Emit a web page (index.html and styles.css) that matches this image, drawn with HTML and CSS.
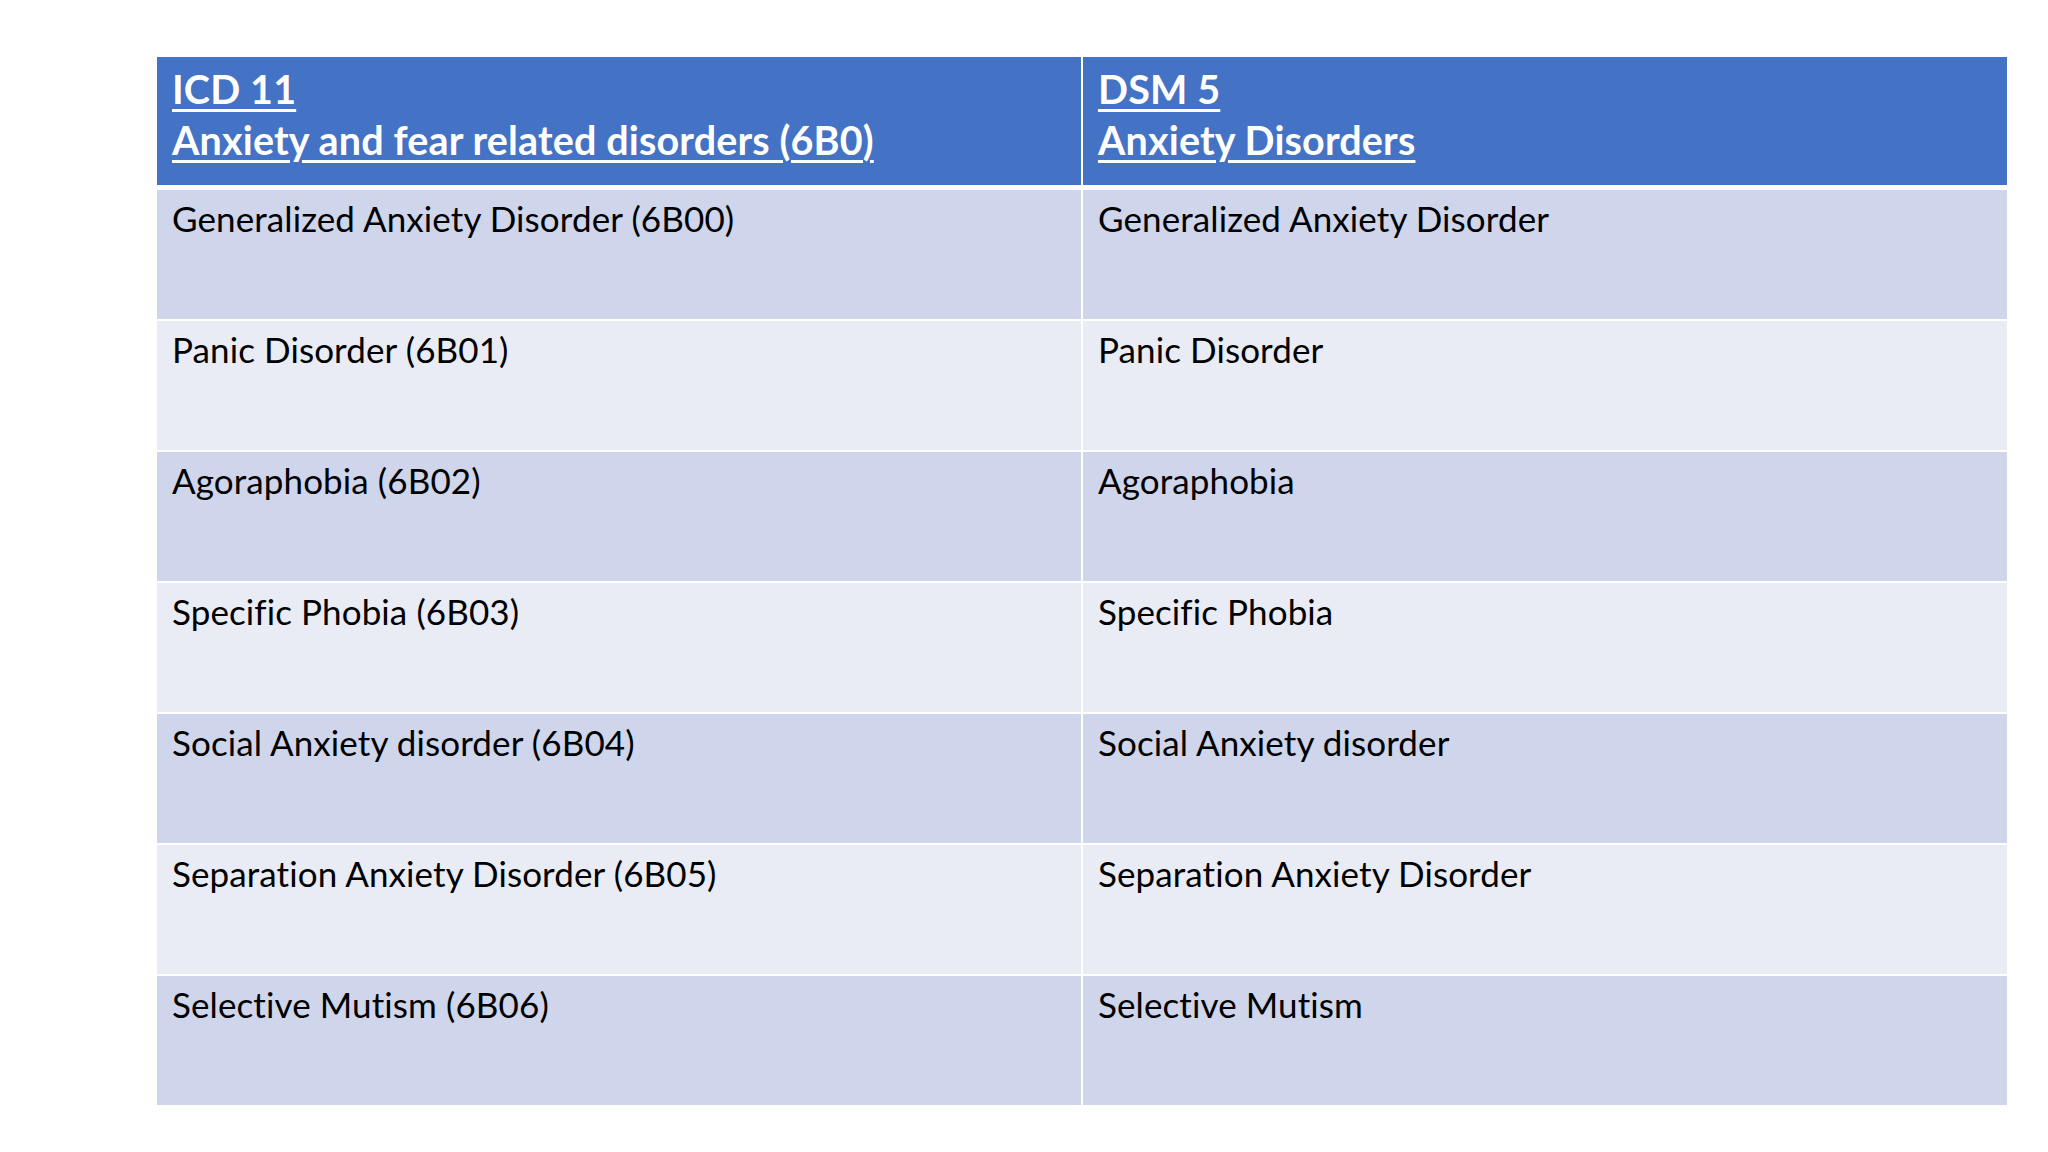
FILE: index.html
```html
<!DOCTYPE html>
<html lang="en">
<head>
<meta charset="utf-8">
<title>ICD 11 vs DSM 5 Anxiety Disorders</title>
<link rel="stylesheet" href="styles.css">
</head>
<body>
<div class="slide">
  <div class="table">
    <div class="row head">
      <div class="cell"><span class="u">ICD 11</span><br><span class="u">Anxiety and fear related disorders (6B0)</span></div>
      <div class="cell"><span class="u">DSM 5</span><br><span class="u">Anxiety Disorders</span></div>
    </div>
    <div class="row odd">
      <div class="cell">Generalized Anxiety Disorder (6B00)</div>
      <div class="cell">Generalized Anxiety Disorder</div>
    </div>
    <div class="row even">
      <div class="cell">Panic Disorder (6B01)</div>
      <div class="cell">Panic Disorder</div>
    </div>
    <div class="row odd">
      <div class="cell">Agoraphobia (6B02)</div>
      <div class="cell">Agoraphobia</div>
    </div>
    <div class="row even">
      <div class="cell">Specific Phobia (6B03)</div>
      <div class="cell">Specific Phobia</div>
    </div>
    <div class="row odd">
      <div class="cell">Social Anxiety disorder (6B04)</div>
      <div class="cell">Social Anxiety disorder</div>
    </div>
    <div class="row even">
      <div class="cell">Separation Anxiety Disorder (6B05)</div>
      <div class="cell">Separation Anxiety Disorder</div>
    </div>
    <div class="row odd">
      <div class="cell">Selective Mutism (6B06)</div>
      <div class="cell">Selective Mutism</div>
    </div>
  </div>
</div>
</body>
</html>
```

FILE: styles.css
```css
html, body {
  margin: 0;
  padding: 0;
  background: #ffffff;
}
.slide {
  width: 2048px;
  height: 1152px;
  padding: 57px 0 0 157px;
  box-sizing: border-box;
  font-family: Lato, "Open Sans", "Liberation Sans", sans-serif;
}
.table {
  width: 1850px;
  display: flex;
  flex-direction: column;
  gap: 2px;
}
.row {
  display: grid;
  grid-template-columns: 924px 924px;
  column-gap: 2px;
  height: 129px;
}
.row.head {
  height: 128px;
  margin-bottom: 3px;
}
.cell {
  box-sizing: border-box;
  padding: 5px 14px 0 15px;
  font-size: 35px;
  line-height: 46px;
  color: #000000;
  letter-spacing: 0.1px;
}
.head .cell {
  background: #4472C4;
  color: #ffffff;
  font-weight: 700;
  font-size: 39.5px;
  line-height: 51px;
  padding-top: 6px;
  letter-spacing: 0.15px;
}
.odd .cell { background: #CFD5EA; }
.even .cell { background: #E9EBF5; }
.u {
  text-decoration: underline;
  text-decoration-thickness: 2.5px;
  text-underline-offset: 5px;
}
```
